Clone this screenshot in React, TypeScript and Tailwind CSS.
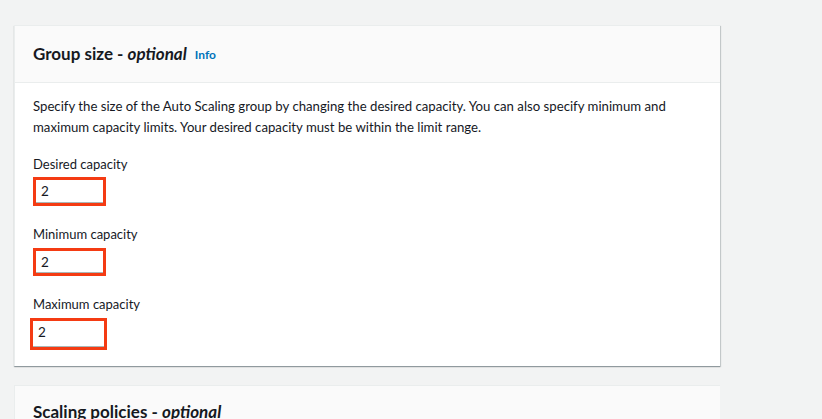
import React from "react";

function Field({ label, boxClass }: { label: string; boxClass: string }) {
  return (
    <div className="flex flex-col">
      <div className="text-[13px] leading-[20px] text-[#16191f]">{label}</div>
      <div className={boxClass}>
        <div className="h-full w-full bg-white border-b border-[#aab7b8] px-[5px] text-[13.5px] leading-[22px] text-[#16191f]">
          2
        </div>
      </div>
    </div>
  );
}

export default function App() {
  return (
    <div
      className="w-[822px] h-[419px] overflow-hidden bg-[#f2f3f3] pt-[25px] pl-[14px]"
      style={{ fontFamily: 'Lato, "Noto Sans", Arial, sans-serif' }}
    >
      <div className="w-[706px] bg-white border-l border-t border-[#eaeded] shadow-[0_1px_1px_0_rgba(0,28,36,0.3),1px_1px_1px_0_rgba(0,28,36,0.15)]">
        <div className="h-[57px] bg-[#fafafa] border-b border-[#eaeded] flex items-center px-[18px]">
          <span className="text-[17px] font-bold text-[#16191f]">
            Group size - <i>optional</i>
          </span>
          <span className="ml-[8px] text-[12px] font-bold text-[#0073bb] mt-[2px]">Info</span>
        </div>
        <div className="px-[18px] pt-[13px] pb-[16px]">
          <p className="text-[13.2px] leading-[21px] text-[#16191f] w-[670px]">
            Specify the size of the Auto Scaling group by changing the desired capacity. You can also specify minimum and
            maximum capacity limits. Your desired capacity must be within the limit range.
          </p>
          <div className="mt-[16px] flex flex-col gap-[18px]">
            <Field label="Desired capacity" boxClass="mt-[3px] w-[73px] h-[29px] border-[3px] border-[#f43b13]" />
            <Field label="Minimum capacity" boxClass="mt-[4px] w-[73px] h-[28px] border-[3px] border-[#f43b13]" />
            <Field label="Maximum capacity" boxClass="mt-[4px] -ml-[3px] w-[77px] h-[32px] border-[3px] border-[#f43b13]" />
          </div>
        </div>
      </div>
      <div className="mt-[19px] w-[706px] h-[60px] bg-[#fafafa] border-l border-t border-[#eaeded] px-[18px] pt-[14px]">
        <span className="text-[17px] leading-[24px] font-bold text-[#16191f]">
          Scaling policies - <i>optional</i>
        </span>
      </div>
    </div>
  );
}
